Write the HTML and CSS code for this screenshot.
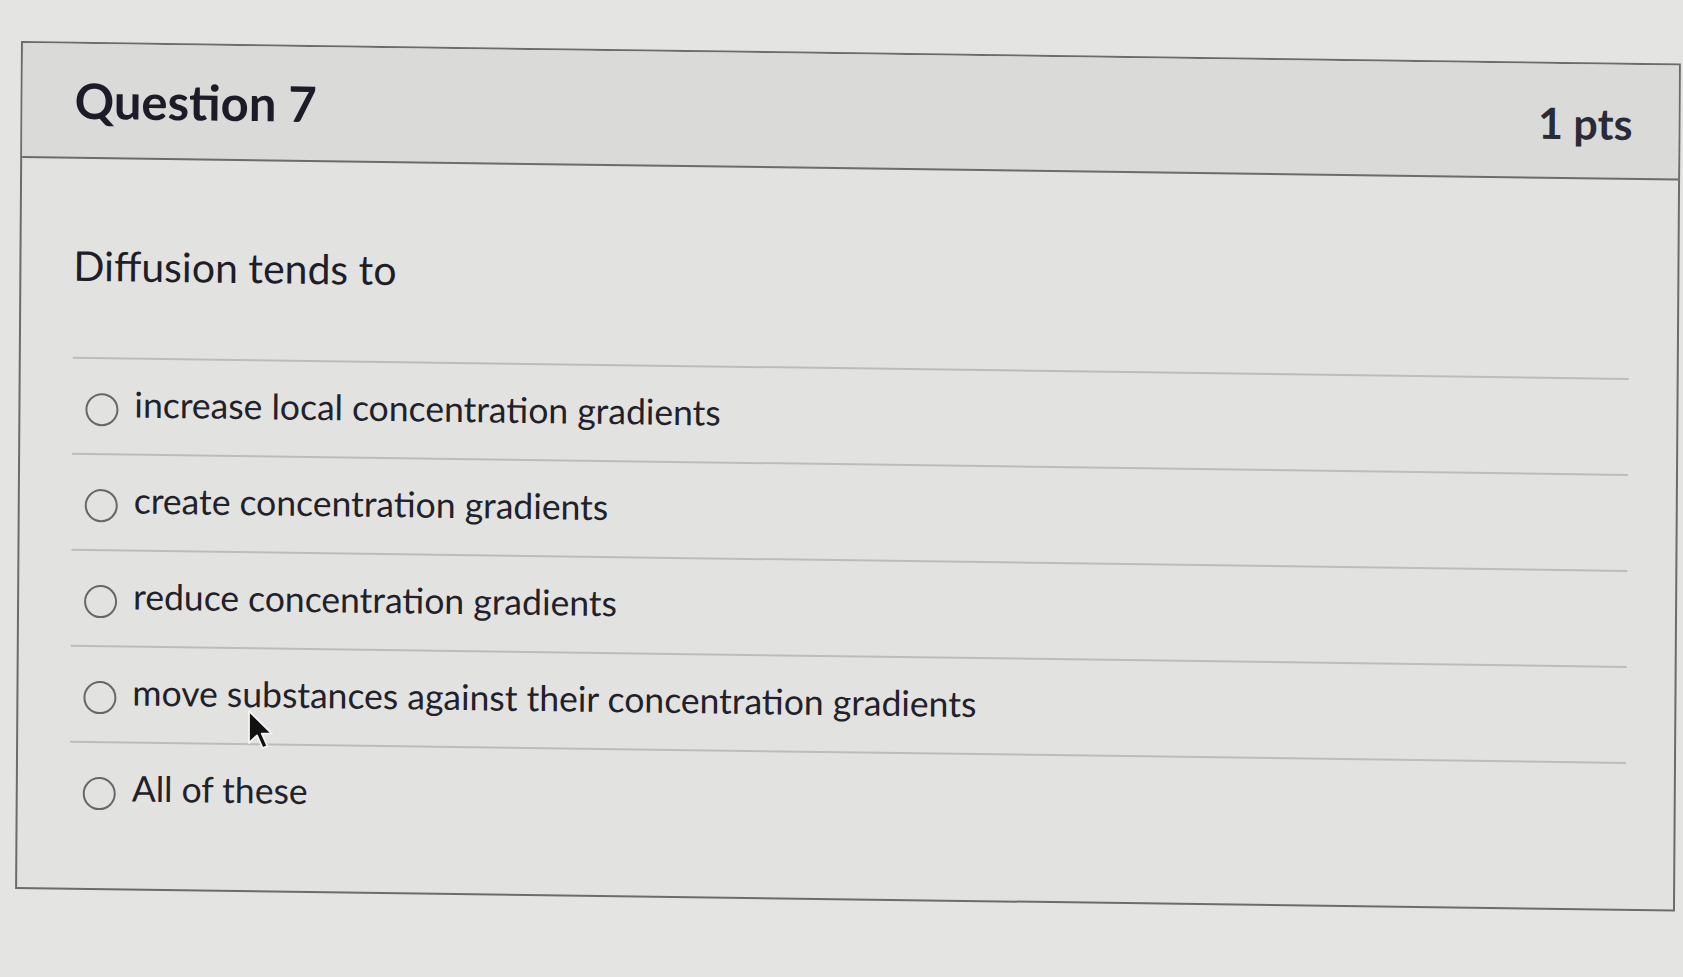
FILE: index.html
```html
<!DOCTYPE html>
<html lang="en">
<head>
<meta charset="utf-8">
<title>Question 7</title>
<link rel="stylesheet" href="styles.css">
</head>
<body>
<div class="page">
  <section class="card">
    <header class="header">
      <h2 class="title">Question 7</h2>
      <span class="points">1 pts</span>
    </header>
    <div class="content">
      <p class="qtext">Diffusion tends to</p>
      <ul class="answers">
        <li class="answer"><span class="radio"></span><span class="label">increase local concentration gradients</span></li>
        <li class="answer"><span class="radio"></span><span class="label">create concentration gradients</span></li>
        <li class="answer"><span class="radio"></span><span class="label">reduce concentration gradients</span></li>
        <li class="answer"><span class="radio"></span><span class="label">move substances against their concentration gradients</span></li>
        <li class="answer"><span class="radio"></span><span class="label">All of these</span></li>
      </ul>
    </div>
  </section>
  <svg class="cursor" width="26" height="40" viewBox="-1 -1 13 20" aria-hidden="true">
    <path d="M0 0 L0 16 L4 12.2 L6.8 18.6 L9.2 17.6 L6.4 11.3 L11.4 11.3 Z" fill="#111" stroke="#f4f4f4" stroke-width="0.9" stroke-linejoin="round"/>
  </svg>
</div>
</body>
</html>
```

FILE: styles.css
```css
html, body {
  margin: 0;
  padding: 0;
  background: #e4e5e3;
  overflow: hidden;
}

.page {
  position: relative;
  height: 977px;
  padding: 41px 0 0 21px;
  box-sizing: border-box;
  font-family: Lato, "Open Sans", "Liberation Sans", sans-serif;
}

.card {
  width: 1660px;
  box-sizing: border-box;
  border: 2px solid #6b6c6c;
  background: #e2e3e1;
  transform-origin: 0 0;
  transform: rotate(0.4deg) skewY(0.38deg);
}

.header {
  height: 115px;
  box-sizing: border-box;
  display: flex;
  align-items: center;
  justify-content: space-between;
  padding: 0 46px 0 52px;
  background: #dadbd9;
  border-bottom: 2px solid #6b6c6c;
}

.title {
  margin: 0;
  font-size: 49px;
  line-height: 1;
  font-weight: 700;
  color: #1c1b27;
}

.points {
  font-size: 43px;
  line-height: 1;
  font-weight: 700;
  color: #2b2b36;
  margin-top: 4px;
}

.content {
  padding: 83px 48px 51px 52px;
}

.qtext {
  margin: 0;
  font-size: 41px;
  line-height: 48px;
  color: #1f1e28;
}

.answers {
  list-style: none;
  margin: 67px 0 0;
  padding: 0;
}

.answer {
  border-top: 2px solid #bcbdbb;
  padding-top: 6px;
  min-height: 88px;
  display: flex;
  align-items: center;
}

.radio {
  flex: none;
  width: 33px;
  height: 33px;
  box-sizing: border-box;
  border: 2.5px solid #65686a;
  border-radius: 50%;
  margin: 0 16px 0 13px;
}

.label {
  font-size: 35.5px;
  line-height: 42px;
  color: #222129;
  margin-bottom: 10px;
}

.cursor {
  position: absolute;
  left: 247px;
  top: 709px;
}
```
